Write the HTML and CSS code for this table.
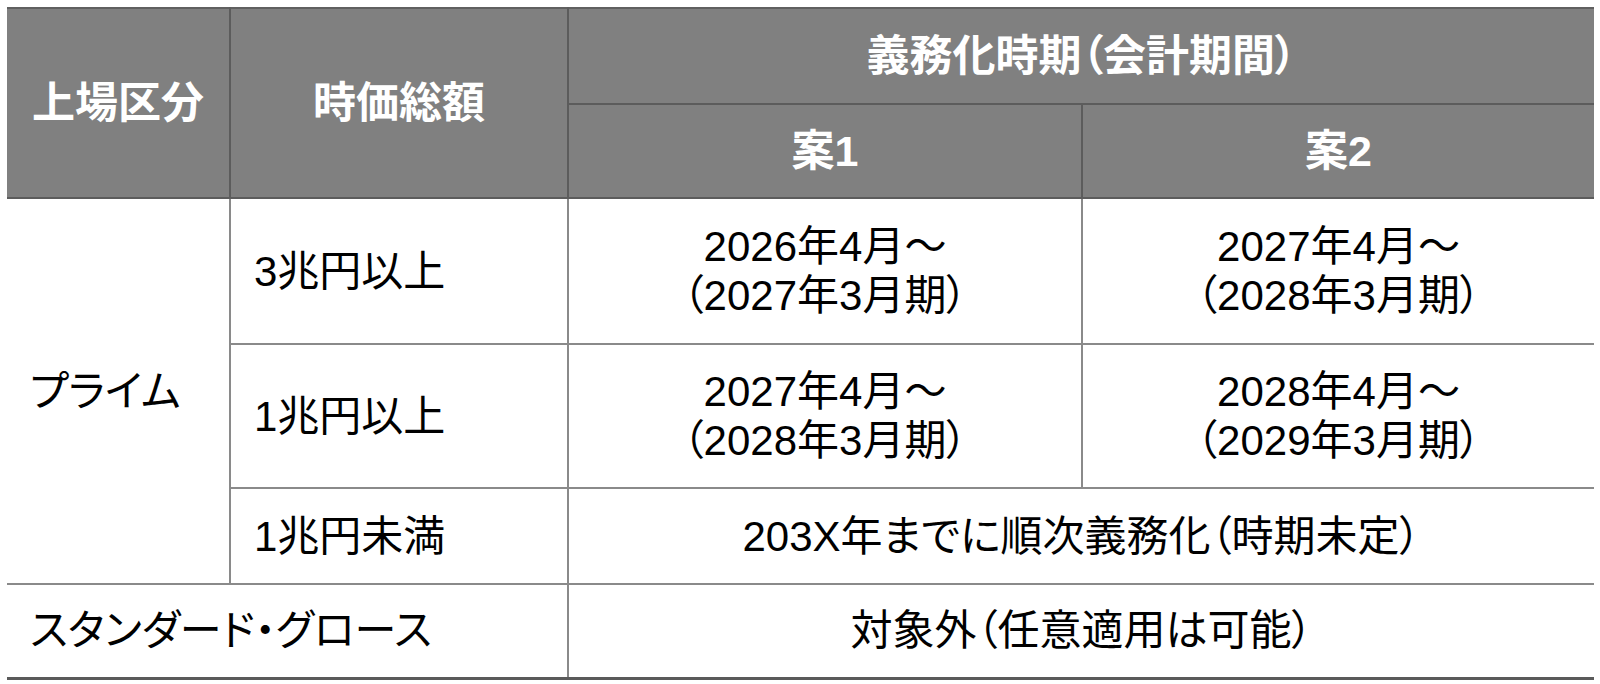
FILE: index.html
```html
<!DOCTYPE html>
<html lang="ja">
<head>
<meta charset="utf-8">
<link rel="stylesheet" href="styles.css">
</head>
<body>
<table class="sched">
  <colgroup>
    <col class="c1"><col class="c2"><col class="c3"><col class="c4">
  </colgroup>
  <thead>
    <tr class="h1">
      <th rowspan="2">上場区分</th>
      <th rowspan="2">時価総額</th>
      <th colspan="2">義務化時期（会計期間）</th>
    </tr>
    <tr class="h2">
      <th>案1</th>
      <th>案2</th>
    </tr>
  </thead>
  <tbody>
    <tr class="r1">
      <td rowspan="3" class="left">プライム</td>
      <td class="left">3兆円以上</td>
      <td class="mid">2026年4月～<br>（2027年3月期）</td>
      <td class="mid">2027年4月～<br>（2028年3月期）</td>
    </tr>
    <tr class="r2">
      <td class="left">1兆円以上</td>
      <td class="mid">2027年4月～<br>（2028年3月期）</td>
      <td class="mid">2028年4月～<br>（2029年3月期）</td>
    </tr>
    <tr class="r3">
      <td class="left">1兆円未満</td>
      <td class="mid" colspan="2">203X年までに順次義務化（時期未定）</td>
    </tr>
    <tr class="r4">
      <td class="left" colspan="2">スタンダード・グロース</td>
      <td class="mid" colspan="2">対象外（任意適用は可能）</td>
    </tr>
  </tbody>
</table>
</body>
</html>
```
FILE: styles.css
```css
html, body {
  margin: 0;
  padding: 0;
  background: #ffffff;
}

.sched {
  margin: 7px 0 0 7px;
  width: 1587px;
  border-collapse: collapse;
  table-layout: fixed;
  font-family: "Liberation Sans", "Noto Sans CJK JP", sans-serif;
  font-size: 42px;
  font-feature-settings: "palt";
  color: #000;
}

.c1 { width: 223px; }
.c2 { width: 338px; }
.c3 { width: 514px; }
.c4 { width: 512px; }

.sched th {
  background: #808080;
  color: #ffffff;
  font-weight: bold;
  font-size: 43px;
  border: 2px solid #5c5c5c;
  padding: 0;
  text-align: center;
  vertical-align: middle;
  line-height: 1;
}

.sched thead tr.h1 th { border-top: 2px solid #606060; }

.h1 { height: 96px; }
.h2 { height: 94px; }

.sched td {
  border: 2px solid #8a8a8a;
  padding: 0;
  vertical-align: middle;
  line-height: 49px;
}

.sched th:first-child,
.sched td:first-child { border-left: none; }
.sched th:last-child,
.sched td:last-child { border-right: none; }
.sched tr.h2 th:first-child { border-left: 2px solid #5c5c5c; }

.left {
  text-align: left;
  padding-left: 23px !important;
}

.mid { text-align: center; }

.r1 { height: 146px; }
.r2 { height: 144px; }
.r3 { height: 96px; }
.r4 { height: 94px; }

.r4 td { border-bottom: 3px solid #5a5a5a; }
```
